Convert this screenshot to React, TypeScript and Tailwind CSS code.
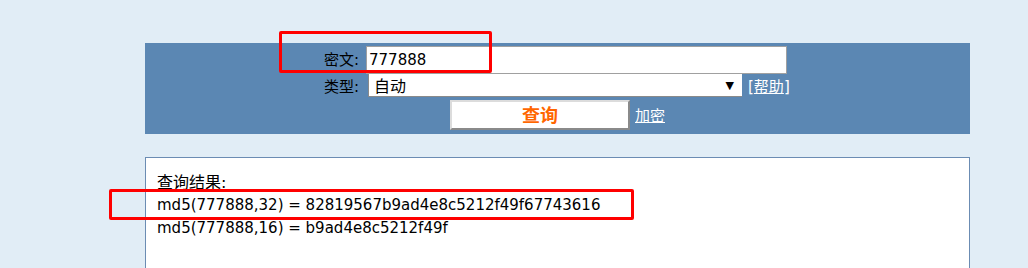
export default function App() {
  return (
    <div className="relative min-h-screen bg-[#e1edf6] font-['DejaVu_Sans','Noto_Sans_CJK_SC',sans-serif] text-black">
      <div className="pl-[145px] pt-[43px]">
        {/* Query form panel */}
        <div className="h-[91px] w-[825px] bg-[#5b87b3] pt-[3px]">
          <div className="flex h-[28px] items-center">
            <div className="w-[221px] pr-[7px] text-right text-[15px]">密文:</div>
            <div className="flex h-[28px] w-[421px] items-center border border-[#a0a0a0] bg-white pl-[2px] text-[15px]">
              777888
            </div>
          </div>
          <div className="flex h-[23px] items-center">
            <div className="w-[221px] pr-[7px] pt-[3px] text-right text-[15px]">类型:</div>
            <div className="ml-[2px] flex h-[23px] w-[374px] items-center justify-between border-b border-l border-[#8a8a8a] bg-white pl-[5px] pr-[8px] text-[16px]">
              <span className="pt-[4px]">自动</span>
              <span className="text-[11px] leading-none">▼</span>
            </div>
            <div className="ml-[6px] pt-[3px] text-[15px] text-white">
              [<span className="underline">帮助</span>]
            </div>
          </div>
          <div className="mt-[3px] flex h-[30px] items-center">
            <button className="ml-[305px] h-[30px] w-[180px] border-2 border-t-[#dcdcdc] border-l-[#dcdcdc] border-b-[#8a8a8a] border-r-[#8a8a8a] bg-white text-[18px] font-bold text-[#ff6600]">
              查询
            </button>
            <a className="ml-[5px] pt-[2px] text-[15px] text-white underline">加密</a>
          </div>
        </div>

        {/* Result box */}
        <div className="mt-[23px] h-[140px] w-[825px] border border-[#6b8cb3] bg-white pl-[11px] pt-[13px] text-[15px] leading-[23px]">
          <div className="text-[16px]">查询结果:</div>
          <div>md5(777888,32) = 82819567b9ad4e8c5212f49f67743616</div>
          <div>md5(777888,16) = b9ad4e8c5212f49f</div>
        </div>
      </div>

      {/* Red annotation boxes */}
      <div className="absolute left-[279px] top-[31px] h-[42px] w-[213px] rounded-[2px] border-[3px] border-[#ff0000]" />
      <div className="absolute left-[109px] top-[189px] h-[31px] w-[525px] rounded-[2px] border-[3px] border-[#ff0000]" />
    </div>
  );
}
